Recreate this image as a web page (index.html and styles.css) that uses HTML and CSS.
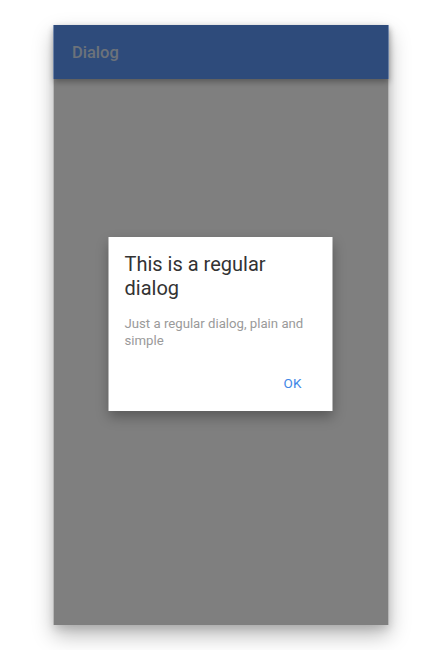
FILE: index.html
```html
<!DOCTYPE html>
<html>
<head>
<meta charset="utf-8">
<link rel="stylesheet" href="styles.css">
</head>
<body>
<div class="phone">
  <header class="appbar"><span class="appbar-title">Dialog</span></header>
  <main class="content"></main>
  <div class="overlay">
    <div class="dialog">
      <h2 class="dialog-title">This is a regular dialog</h2>
      <p class="dialog-body">Just a regular dialog, plain and simple</p>
      <div class="dialog-actions"><button class="btn">OK</button></div>
    </div>
  </div>
</div>
</body>
</html>
```

FILE: styles.css
```css
html, body { margin: 0; padding: 0; background: #fff; }
body { font-family: Roboto, "Noto Sans", sans-serif; padding: 25px 0 25px 0; }
.phone {
  position: relative;
  width: 335px;
  height: 600px;
  margin: 0 auto;
  display: flex;
  flex-direction: column;
  background: #fff;
  box-shadow: 0 10px 20px rgba(0,0,0,0.28), 0 4px 8px rgba(0,0,0,0.12);
  transform: translateX(0.5px);
}
.appbar {
  height: 54px;
  background: #5c96f6;
  display: flex;
  align-items: center;
  padding-left: 19px;
  box-shadow: 0 3px 6px rgba(0,0,0,0.3);
  position: relative;
  z-index: 1;
}
.appbar-title { color: #d8e4f4; font-size: 16.5px; font-weight: 500; padding-top: 1px; }
.content { flex: 1; background: #fff; }
.overlay {
  position: absolute;
  inset: 0;
  z-index: 2;
  background: rgba(0,0,0,0.5);
  display: flex;
  align-items: center;
  justify-content: center;
}
.dialog {
  width: 224px;
  background: #fff;
  box-sizing: border-box;
  padding: 15px 16px 0 16px;
  box-shadow: 0 6px 12px rgba(0,0,0,0.3);
  margin-top: -2px;
}
.dialog-title {
  margin: 0;
  font-size: 20px;
  font-weight: 400;
  line-height: 24px;
  color: #333;
}
.dialog-body {
  margin: 15px 0 0 0;
  font-size: 13.2px;
  line-height: 17px;
  color: #9a9a9a;
}
.dialog-actions {
  display: flex;
  justify-content: flex-end;
  padding: 18px 0 12px 0;
  margin-right: -8px;
}
.btn {
  border: 0;
  background: none;
  font-family: inherit;
  font-size: 13.5px;
  color: #3f87e6;
  padding: 8px 8px;
  min-width: 64px;
  text-align: center;
  line-height: 16px;
  margin: 0;
}
```
